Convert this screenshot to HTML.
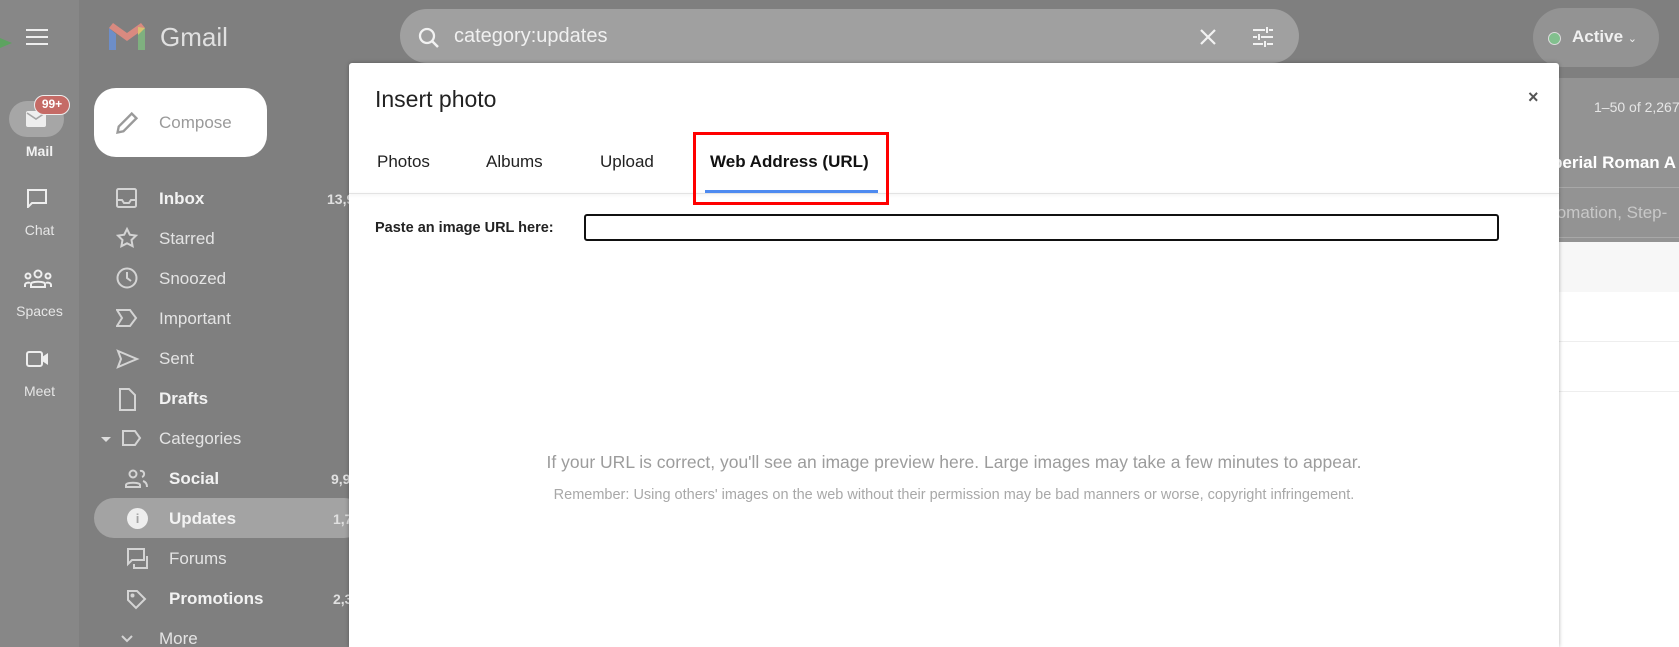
<!DOCTYPE html>
<html><head><meta charset="utf-8"><style>
*{margin:0;padding:0;box-sizing:border-box}
html,body{width:1679px;height:647px;overflow:hidden}
body{background:#7f7f7f;font-family:"Liberation Sans",Arial,sans-serif;position:relative}
.abs{position:absolute}
.rail{left:0;top:0;width:79px;height:647px;background:#878787}
.rl{color:#e6e6e6;font-size:14px;width:79px;text-align:center}
.nav{left:159px;font-size:17px;color:#e4e4e4}
.b{font-weight:bold;color:#f2f2f2}
.cnt{font-size:14px;color:#e0e0e0;font-weight:bold}
svg{position:absolute}
.ic{fill:none;stroke:#d4d4d4;stroke-width:2}
</style></head><body>
<div class="abs rail"></div>
<div class="abs" style="left:26px;top:29px;width:22px;height:2px;background:#eee;box-shadow:0 7px 0 #eee,0 14px 0 #eee"></div>
<div class="abs" style="left:0;top:38px;width:0;height:0;border-left:12px solid #4caf50;border-top:5px solid transparent;border-bottom:5px solid transparent;opacity:.7"></div>
<div class="abs" style="left:9px;top:101px;width:55px;height:36px;border-radius:18px;background:#a6a6a6"></div>
<svg style="left:26px;top:111px" width="20" height="16" viewBox="0 0 20 16"><rect x="0" y="0" width="20" height="16" rx="2" fill="#eee"/><path d="M1 2l9 6 9-6" stroke="#a6a6a6" stroke-width="1.6" fill="none"/></svg>
<div class="abs" style="left:34px;top:95px;width:36px;height:20px;border-radius:10px;background:#c56b66;border:1.5px solid #eee;color:#fff;font-size:12px;font-weight:bold;text-align:center;line-height:17px">99+</div>
<div class="abs rl b" style="top:143px;font-size:14px">Mail</div>
<svg style="left:26px;top:188px" width="22" height="20" viewBox="0 0 22 20"><path d="M2 2h18v13H6l-4 4z" stroke="#eee" stroke-width="2" fill="none"/></svg>
<div class="abs rl" style="top:222px">Chat</div>
<svg style="left:24px;top:269px" width="28" height="20" viewBox="0 0 28 20"><circle cx="14" cy="5" r="3.5" stroke="#eee" stroke-width="2" fill="none"/><circle cx="4" cy="7" r="2.5" stroke="#eee" stroke-width="2" fill="none"/><circle cx="24" cy="7" r="2.5" stroke="#eee" stroke-width="2" fill="none"/><path d="M7 18v-3c0-3 14-3 14 0v3zM1 18v-2c0-2 3-3 5-2M27 18v-2c0-2-3-3-5-2" stroke="#eee" stroke-width="2" fill="none"/></svg>
<div class="abs rl" style="top:303px">Spaces</div>
<svg style="left:26px;top:350px" width="24" height="18" viewBox="0 0 24 18"><rect x="1" y="2" width="15" height="14" rx="2" stroke="#eee" stroke-width="2" fill="none"/><path d="M16 7l6-4v12l-6-4z" fill="#eee"/></svg>
<div class="abs rl" style="top:383px">Meet</div>

<svg style="left:107px;top:22px" width="40" height="30" viewBox="0 0 40 30"><path d="M2 6v22h7V12z" fill="#6d8ec9"/><path d="M31 12v16h7V6z" fill="#7fb07f"/><path d="M2 6l18 13L38 6l-4-5-14 10L6 1z" fill="#d98a80"/><path d="M31 5l7 1-7 7z" fill="#d8c070"/></svg>
<div class="abs" style="left:160px;top:22px;font-size:26px;color:#e0e0e0">Gmail</div>

<div class="abs" style="left:400px;top:9px;width:899px;height:54px;border-radius:27px;background:#a0a0a0"></div>
<svg style="left:418px;top:27px" width="22" height="22" viewBox="0 0 22 22"><circle cx="9" cy="9" r="7" stroke="#f2f2f2" stroke-width="2.3" fill="none"/><path d="M14 14l6 6" stroke="#f2f2f2" stroke-width="2.5"/></svg>
<div class="abs" style="left:454px;top:25px;font-size:20px;color:#f0f0f0">category:updates</div>
<svg style="left:1199px;top:28px" width="18" height="18" viewBox="0 0 18 18"><path d="M2 2l14 14M16 2L2 16" stroke="#f2f2f2" stroke-width="2.2"/></svg>
<svg style="left:1252px;top:26px" width="22" height="22" viewBox="0 0 22 22"><path d="M1 4h12M17 4h4M1 11h4M9 11h12M1 18h10M15 18h6M15 1v6M7 8v6M13 15v6" stroke="#f2f2f2" stroke-width="2"/></svg>
<div class="abs" style="left:1533px;top:8px;width:126px;height:59px;border-radius:30px;background:#939393"></div>
<div class="abs" style="left:1548px;top:32px;width:13px;height:13px;border-radius:50%;background:#82c08e;border:1px solid #ddd"></div>
<div class="abs" style="left:1572px;top:27px;font-size:17px;font-weight:bold;color:#f0f0f0">Active <span style="font-size:11px;font-weight:normal">&#8964;</span></div>

<div class="abs" style="left:94px;top:88px;width:173px;height:69px;border-radius:22px;background:#fff"></div>
<svg style="left:114px;top:110px" width="26" height="26" viewBox="0 0 22 22"><path d="M3 19l1-5L15 3l4 4L8 18z" stroke="#9a9a9a" stroke-width="2" fill="none"/></svg>
<div class="abs" style="left:159px;top:113px;font-size:17px;color:#9a9a9a">Compose</div>

<div class="abs" style="left:94px;top:498px;width:270px;height:40px;border-radius:20px;background:#a3a3a3"></div>
<div class="abs nav b" style="top:189px">Inbox</div><div class="abs cnt" style="left:327px;top:191px">13,9</div>
<div class="abs nav" style="top:229px">Starred</div>
<div class="abs nav" style="top:269px">Snoozed</div>
<div class="abs nav" style="top:309px">Important</div>
<div class="abs nav" style="top:349px">Sent</div>
<div class="abs nav b" style="top:389px">Drafts</div>
<div class="abs nav" style="top:429px">Categories</div>
<div class="abs nav b" style="left:169px;top:469px">Social</div><div class="abs cnt" style="left:331px;top:471px">9,9</div>
<div class="abs nav b" style="left:169px;top:509px">Updates</div><div class="abs cnt" style="left:333px;top:511px">1,7</div>
<div class="abs nav" style="left:169px;top:549px">Forums</div>
<div class="abs nav b" style="left:169px;top:589px">Promotions</div><div class="abs cnt" style="left:333px;top:591px">2,3</div>
<div class="abs nav" style="top:629px">More</div>

<svg style="left:116px;top:187px" width="50" height="460" viewBox="0 0 50 460" class="ic">
<rect x="1" y="2" width="19" height="18" rx="1.5"/><path d="M1 13h5l2 3h5l2-3h5"/>
<path d="M11 42l2.8 5.7 6.2.9-4.5 4.4 1.1 6.2-5.6-2.9-5.6 2.9 1.1-6.2-4.5-4.4 6.2-.9z"/>
<circle cx="11" cy="91" r="9.5"/><path d="M11 85v6l4 3"/>
<path d="M1 123h13l6 8-6 8H1l5-8z"/>
<path d="M2 164l19 8-19 8 3-8z"/>
<path d="M4 202h9l6 6v15H4z"/>
<path d="M7 244h12l5 7-5 7H7z"/>
<circle cx="17" cy="287" r="3.5"/><path d="M10 300v-2c0-3 14-3 14 0v2z"/><path d="M24 284a3 3 0 1 1 2 6M27 294c3 1 4 3 4 6"/>
<path d="M12 362h16v11H16l-4 4zM18 377v4h13v-12"/>
<path d="M12 404h9l8 8-9 9-8-8z"/><circle cx="16.5" cy="408.5" r="1"/>
<path d="M6 449l5 5 5-5"/>
</svg>
<div class="abs" style="left:101px;top:437px;border-left:5px solid transparent;border-right:5px solid transparent;border-top:5px solid #ddd"></div>
<div class="abs" style="left:127px;top:508px;width:21px;height:21px;border-radius:50%;background:#eee;color:#a3a3a3;font-weight:bold;font-size:13px;text-align:center;line-height:21px">i</div>

<div class="abs" style="left:1540px;top:78px;width:139px;height:164px;background:#939393;border-radius:16px 0 0 0"></div>
<div class="abs" style="left:1594px;top:99px;font-size:14px;color:#e6e6e6;white-space:nowrap">1–50 of 2,267</div>
<div class="abs" style="left:1552px;top:153px;font-size:17px;font-weight:bold;color:#fff;white-space:nowrap">perial Roman A</div>
<div class="abs" style="left:1540px;top:187px;width:139px;height:1px;background:#a8a8a8"></div>
<div class="abs" style="left:1552px;top:203px;font-size:17px;color:#c8c8c8;white-space:nowrap">tomation, Step-</div>
<div class="abs" style="left:1540px;top:237px;width:139px;height:1px;background:#a8a8a8"></div>
<div class="abs" style="left:1540px;top:242px;width:139px;height:405px;background:#fff"></div>
<div class="abs" style="left:1540px;top:242px;width:139px;height:50px;background:#f7f7f7"></div>
<div class="abs" style="left:1540px;top:341px;width:139px;height:1px;background:#eee"></div>
<div class="abs" style="left:1540px;top:391px;width:139px;height:1px;background:#eee"></div>

<div class="abs" style="left:349px;top:63px;width:1210px;height:584px;background:#fff;border-radius:3px 3px 0 0;box-shadow:0 0 4px rgba(0,0,0,.3)"></div>
<div class="abs" style="left:375px;top:86px;font-size:23px;color:#222">Insert photo</div>
<div class="abs" style="left:1528px;top:87px;font-size:18px;color:#555;font-weight:bold">×</div>
<div class="abs" style="left:349px;top:193px;width:1210px;height:1px;background:#e3e3e3;box-shadow:0 1px 3px rgba(0,0,0,.12)"></div>
<div class="abs" style="left:377px;top:152px;font-size:17px;color:#222">Photos</div>
<div class="abs" style="left:486px;top:152px;font-size:17px;color:#222">Albums</div>
<div class="abs" style="left:600px;top:152px;font-size:17px;color:#222">Upload</div>
<div class="abs" style="left:710px;top:152px;font-size:17px;color:#111;font-weight:bold">Web Address (URL)</div>
<div class="abs" style="left:705px;top:190px;width:173px;height:3px;background:#4d8af0"></div>
<div class="abs" style="left:693px;top:132px;width:196px;height:73px;border:3px solid #f00"></div>
<div class="abs" style="left:375px;top:220px;font-size:14.5px;font-weight:bold;color:#222">Paste an image URL here:</div>
<div class="abs" style="left:584px;top:214px;width:915px;height:27px;border:2px solid #111;border-radius:3px"></div>
<div class="abs" style="left:349px;top:452px;width:1210px;text-align:center;font-size:17.5px;color:#9c9c9c">If your URL is correct, you'll see an image preview here. Large images may take a few minutes to appear.</div>
<div class="abs" style="left:349px;top:487px;width:1210px;text-align:center;font-size:14.5px;color:#a8a8a8">Remember: Using others' images on the web without their permission may be bad manners or worse, copyright infringement.</div>
</body></html>
